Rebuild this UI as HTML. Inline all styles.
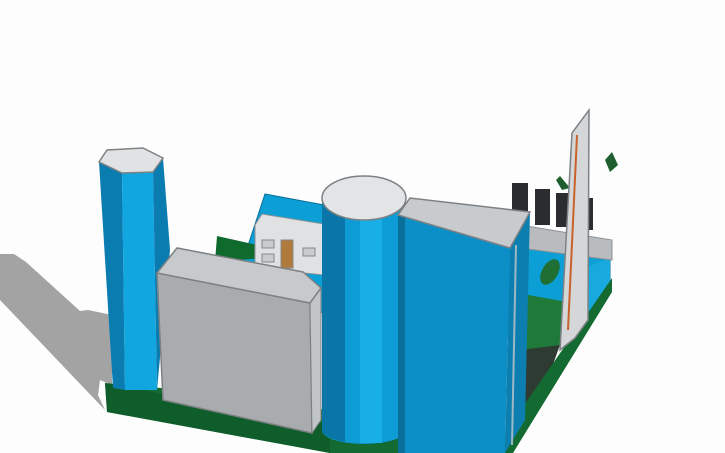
<!DOCTYPE html>
<html><head><style>html,body{margin:0;padding:0;background:#fff;overflow:hidden}svg{display:block}</style></head>
<body>
<svg width="725" height="453" viewBox="0 0 725 453" xmlns="http://www.w3.org/2000/svg">
<rect width="725" height="453" fill="#fdfdfd"/>
<!-- shadow -->
<polygon points="0,254 14,254 26,262 80,311 88,310 112,315 112,385 100,380 98,395 105,410 0,300" fill="#a3a3a3"/>
<!-- back blue plate -->
<polygon points="265,194 610,258 610,290 560,345 230,300" fill="#0b9fd6" stroke="#0a6f97" stroke-width="1"/>
<polygon points="580,270 610,258 610,290 570,335" fill="#18a9df"/>
<!-- rail -->
<polygon points="520,225 612,240 612,260 520,248" fill="#b9bcbf" stroke="#8d9093" stroke-width="1"/>
<rect x="512" y="183" width="16" height="40" fill="#2a2c30"/>
<rect x="535" y="189" width="15" height="36" fill="#2a2c30"/>
<rect x="556" y="193" width="14" height="34" fill="#2a2c30"/>
<rect x="583" y="198" width="10" height="32" fill="#2a2c30"/>
<!-- plane -->
<ellipse cx="550" cy="272" rx="8" ry="14" fill="#1f6e34" transform="rotate(30 550 272)"/>
<polygon points="605,160 612,152 618,165 610,172" fill="#1f5e2e"/>
<polygon points="556,180 560,176 570,188 562,190" fill="#1f5e2e"/>
<!-- green inner area -->
<polygon points="528,295 585,305 570,345 520,350" fill="#1f7a3a"/>
<polygon points="520,350 560,345 540,400 518,420" fill="#2e3b32"/>
<!-- green base -->
<polygon points="105,383 240,395 500,440 612,278 612,292 513,453 330,453 107,412" fill="#136b32"/>
<polygon points="105,383 330,425 330,453 107,412" fill="#0f5d2a"/>
<polygon points="217,236 262,246 262,258 215,262" fill="#0f6a2e"/>
<!-- beige box behind -->
<polygon points="255,225 262,214 324,224 324,275 255,268" fill="#dfe1e3" stroke="#8d9093" stroke-width="1"/>
<rect x="281" y="240" width="12" height="28" fill="#b07a3c" stroke="#888"/>
<rect x="262" y="240" width="12" height="8" fill="#c9cbcd" stroke="#888"/>
<rect x="262" y="254" width="12" height="8" fill="#c9cbcd" stroke="#888"/>
<rect x="303" y="248" width="12" height="8" fill="#c9cbcd" stroke="#888"/>
<!-- hex prism -->
<polygon points="99,162 122,173 125,390 113,388" fill="#0a7cb0"/>
<polygon points="122,173 153,172 157,390 125,390" fill="#12a6e0"/>
<polygon points="153,172 163,158 170,250 157,390" fill="#0a7cb0"/>
<polygon points="99,162 107,150 143,148 163,158 153,172 122,173" fill="#e0e2e4" stroke="#7d8184" stroke-width="1.5"/>
<!-- gray box -->
<polygon points="157,273 310,303 312,433 163,400" fill="#a9acaf" stroke="#7d8184" stroke-width="1.5"/>
<polygon points="310,303 321,288 321,420 312,433" fill="#c2c5c8" stroke="#7d8184" stroke-width="1"/>
<polygon points="157,273 177,248 303,272 321,288 310,303" fill="#c7cacd" stroke="#7d8184" stroke-width="1.5"/>
<!-- cylinder -->
<path d="M322,198 L322,430 A42,14 0 0 0 406,430 L406,198 Z" fill="#0e9cd6"/>
<path d="M322,198 L322,430 A42,14 0 0 0 345,442 L345,215 Z" fill="#0a76a8"/>
<rect x="360" y="215" width="22" height="228" fill="#18aee6"/>
<ellipse cx="364" cy="198" rx="42" ry="22" fill="#e2e4e6" stroke="#7d8184" stroke-width="1.5"/>
<!-- big block -->
<polygon points="398,215 510,248 505,453 398,453" fill="#0b8fc6"/>
<polygon points="398,215 405,216 405,453 398,453" fill="#0a6f9b"/>
<polygon points="510,248 530,212 525,420 505,453" fill="#0c7fb0"/>
<line x1="516" y1="245" x2="512" y2="445" stroke="#9fb7c4" stroke-width="2"/>
<polygon points="398,215 410,198 530,212 510,248" fill="#c8cbce" stroke="#7d8184" stroke-width="1.5"/>
<!-- sign -->
<polygon points="572,133 589,110 588,320 575,338 560,350" fill="#d4d6d8" stroke="#7d8184" stroke-width="1.5"/>
<line x1="577" y1="135" x2="568" y2="330" stroke="#c8622a" stroke-width="2"/>
</svg>
</body></html>
